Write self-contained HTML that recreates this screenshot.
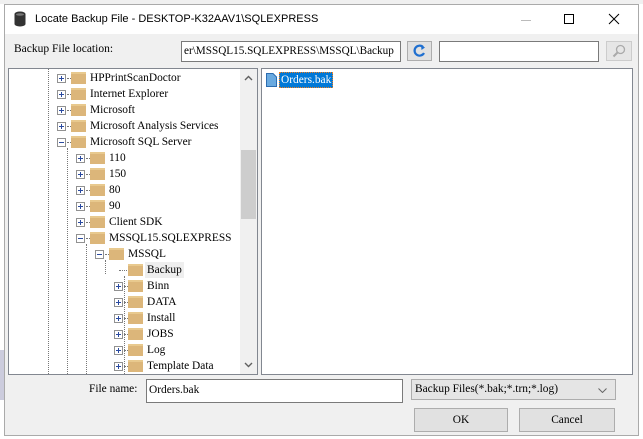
<!DOCTYPE html>
<html><head><style>
*{box-sizing:border-box;margin:0;padding:0}
body{width:643px;height:439px;background:#fff;position:relative;overflow:hidden;font-family:"Liberation Serif",serif;font-size:12px;color:#000}
.a{position:absolute}
.dlg{left:4px;top:4px;width:635px;height:432px;background:#f0f0f0;border:1px solid #aaa}
.tb{left:0;top:0;width:633px;height:29px;background:#fff;font-family:"Liberation Sans",sans-serif;font-size:11px}
.row{position:absolute;height:16px;line-height:16px;white-space:nowrap;font-size:11.4px}
.ex{position:absolute;width:9px;height:9px;border:1px solid #919191;background:#fff;top:4px}
.ex:before{content:"";position:absolute;left:1px;top:3px;width:5px;height:1px;background:#2a4aa0}
.ex.p:after{content:"";position:absolute;left:3px;top:1px;width:1px;height:5px;background:#2a4aa0}
.fd{position:absolute;width:15px;height:12px;top:2px;background:#dcb67a;border-top:2px solid #e8c98e}
.dot{position:absolute;top:8px;height:1px;border-top:1px dotted #777;width:5px}
.vd{position:absolute;border-left:1px dotted #777}
.btn{background:#e1e1e1;border:1px solid #adadad;text-align:center}
</style></head><body>
<div class="a" style="left:0;top:0;width:643px;height:4px;background:#f0f0f0"></div>
<div class="a" style="left:0;top:350px;width:4px;height:50px;background:#ccd"></div>
<div class="a dlg">
 <div class="a tb">
  <svg class="a" style="left:9px;top:6px" width="12" height="16"><ellipse cx="6" cy="3" rx="5.5" ry="2.5" fill="#333"/><rect x="0.5" y="3" width="11" height="10" fill="#333"/><ellipse cx="6" cy="13" rx="5.5" ry="2.5" fill="#333"/><ellipse cx="6" cy="3.5" rx="4" ry="1.3" fill="#777"/></svg>
  <div class="a" style="left:30px;top:8px">Locate Backup File - DESKTOP-K32AAV1\SQLEXPRESS</div>
  <div class="a" style="left:516px;top:15px;width:10px;height:1px;background:#bbb"></div>
  <div class="a" style="left:559px;top:9px;width:10px;height:10px;border:1px solid #000"></div>
  <svg class="a" style="left:603px;top:8px" width="12" height="12"><path d="M1 1L11 11M11 1L1 11" stroke="#000" stroke-width="1"/></svg>
 </div>
 <div class="a" style="left:9px;top:38px;font-size:11.5px">Backup File location:</div>
 <div class="a" style="left:176px;top:36px;width:220px;height:21px;background:#fff;border:1px solid #7a7a7a;line-height:19px;padding-left:2px;overflow:hidden;white-space:nowrap;font-size:11.2px">er\MSSQL15.SQLEXPRESS\MSSQL\Backup</div>
 <div class="a btn" style="left:402px;top:36px;width:25px;height:20px"><svg width="14" height="14" style="margin-top:2px"><path d="M10 3A5 5 0 1 0 11 9" stroke="#1f6fd0" stroke-width="2.2" fill="none"/><path d="M8 1L12 3.5L8.5 6Z" fill="#1f6fd0"/></svg></div>
 <div class="a" style="left:434px;top:36px;width:160px;height:21px;background:#fff;border:1px solid #7a7a7a"></div>
 <div class="a btn" style="left:601px;top:36px;width:26px;height:20px;background:#e6e6e6;border-color:#ccc"><svg width="14" height="14" style="margin-top:2px"><circle cx="8.5" cy="5.5" r="4" stroke="#aaa" fill="none" stroke-width="1.3"/><path d="M5.5 8.5L1.5 12.5" stroke="#aaa" stroke-width="2"/></svg></div>

 <div class="a" style="left:3px;top:63px;width:250px;height:307px;background:#fff;border:1px solid #828790;overflow:hidden">
  <div class="vd" style="left:39px;top:0;height:305px"></div>
  <div class="vd" style="left:58px;top:79px;height:226px"></div>
  <div class="vd" style="left:77px;top:175px;height:130px"></div>
  <div class="vd" style="left:96px;top:191px;height:14px"></div>
  <div class="vd" style="left:115px;top:207px;height:98px"></div>
  <div id="tree"></div>
  <div class="a" style="left:231px;top:0;width:17px;height:305px;background:#f0f0f0"></div>
  <div class="a" style="left:232px;top:81px;width:15px;height:69px;background:#cdcdcd"></div>
  <svg class="a" style="left:235px;top:6px" width="9" height="6"><path d="M1 5L4.5 1.5L8 5" stroke="#606060" stroke-width="1.4" fill="none"/></svg>
  <svg class="a" style="left:235px;top:293px" width="9" height="6"><path d="M1 1L4.5 4.5L8 1" stroke="#606060" stroke-width="1.4" fill="none"/></svg>
 </div>
 <div class="a" style="left:256px;top:63px;width:372px;height:307px;background:#fff;border:1px solid #828790">
  <svg class="a" style="left:4px;top:4px" width="11" height="14"><path d="M0.5 0.5H7L10.5 4V13.5H0.5Z" fill="#6aaae0" stroke="#2d6db0"/></svg>
  <div class="a" style="left:17px;top:3px;height:16px;line-height:14px;padding:0 1px;background:#0078d7;color:#fff;border:1px dotted #f08020;font-size:11.4px">Orders.bak</div>
 </div>
 <div class="a" style="left:84px;top:378px;font-size:11.4px">File name:</div>
 <div class="a" style="left:141px;top:374px;width:257px;height:24px;background:#fff;border:1px solid #7a7a7a;padding:2px 2px;line-height:16px;font-size:11.4px">Orders.bak</div>
 <div class="a" style="left:406px;top:374px;width:205px;height:21px;background:#e5e5e5;border:1px solid #adadad;line-height:19px;padding-left:3px;font-size:11.4px">Backup Files(*.bak;*.trn;*.log)
  <svg class="a" style="left:186px;top:8px" width="9" height="5"><path d="M0.5 0.5L4.5 4.5L8.5 0.5" stroke="#666" fill="none"/></svg></div>
 <div class="a btn" style="left:409px;top:403px;width:94px;height:24px;line-height:22px;font-size:11.4px">OK</div>
 <div class="a btn" style="left:514px;top:403px;width:96px;height:24px;line-height:22px;font-size:11.4px">Cancel</div>
</div>
<script>
var rows=[[1,"HPPrintScanDoctor","p"],[1,"Internet Explorer","p"],[1,"Microsoft","p"],[1,"Microsoft Analysis Services","p"],[1,"Microsoft SQL Server","m"],[2,"110","p"],[2,"150","p"],[2,"80","p"],[2,"90","p"],[2,"Client SDK","p"],[2,"MSSQL15.SQLEXPRESS","m"],[3,"MSSQL","m"],[4,"Backup",""],[4,"Binn","p"],[4,"DATA","p"],[4,"Install","p"],[4,"JOBS","p"],[4,"Log","p"],[4,"Template Data","p"]];
var h="";rows.forEach(function(r,i){var b=47+(r[0]-1)*19,t=1+i*16;
h+='<div class="row" style="left:0;top:'+t+'px;width:230px">';
if(r[2])h+='<div class="ex '+r[2]+'" style="left:'+(b+1)+'px"></div>';
h+='<div class="dot" style="left:'+(r[2]?b+11:b+6)+'px;width:'+(r[2]?4:10)+'px"></div>';
h+='<div class="fd" style="left:'+(b+15)+'px"></div>';
h+='<div style="position:absolute;left:'+(b+32)+'px;top:0;padding:0 2px;'+(r[1]=="Backup"?'background:#eee;':'')+'">'+r[1]+'</div></div>';});
document.getElementById("tree").innerHTML=h;
</script>
</body></html>
